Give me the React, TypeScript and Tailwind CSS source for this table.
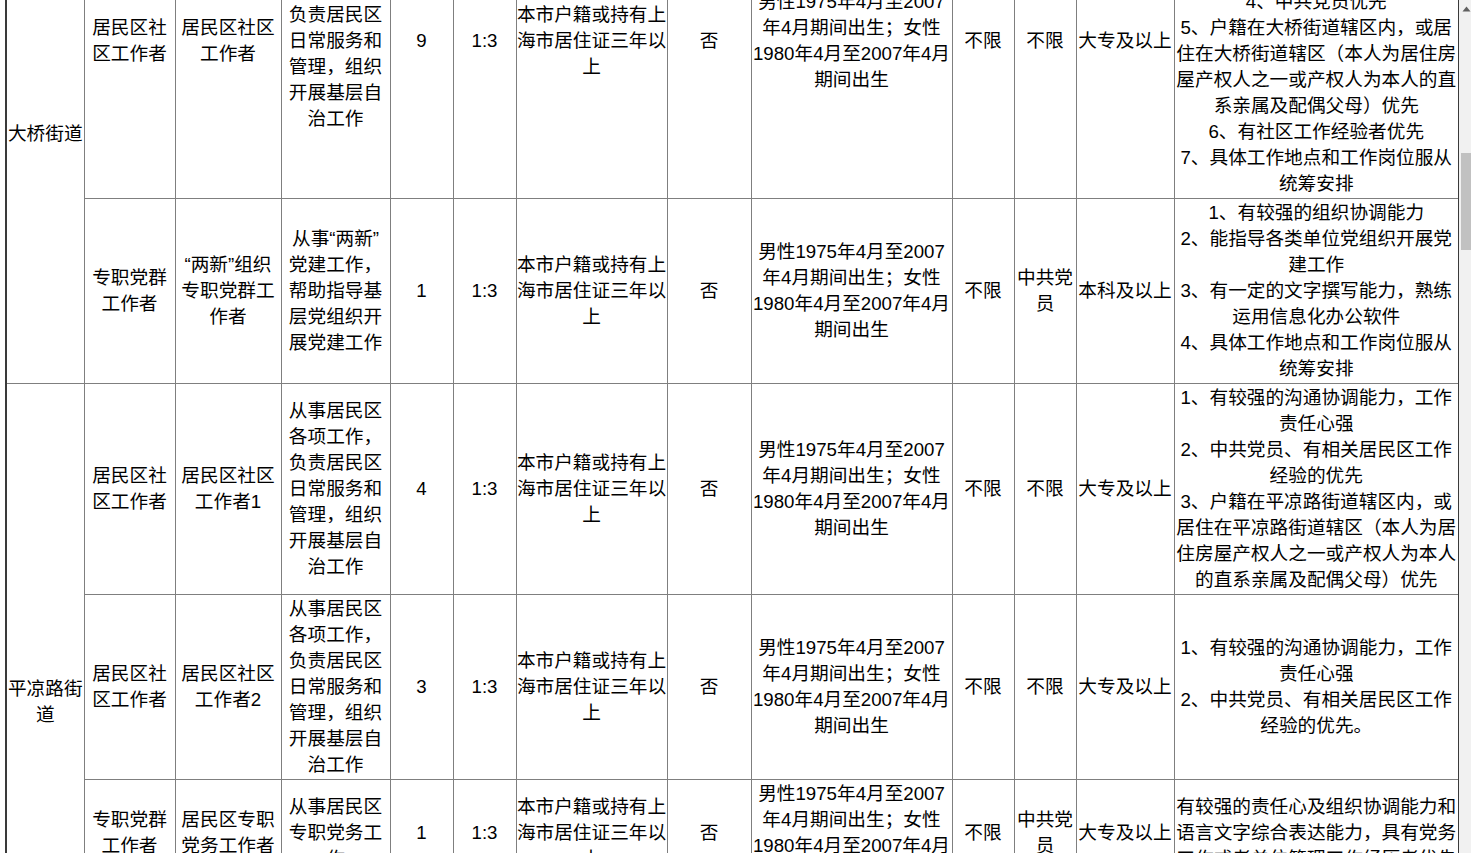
import { useLayoutEffect, useRef } from 'react';

interface Job {
  cat: string;
  name: string;
  duty: string;
  count: string;
  politics: string;
  edu: string;
  other: string[];
  anchor?: boolean;
}

interface Street {
  name: string;
  jobs: Job[];
}

const HUJI = '本市户籍或持有上海市居住证三年以上';
const AGE = '男性1975年4月至2007年4月期间出生；女性1980年4月至2007年4月期间出生';
const DUTY = '从事居民区各项工作，负责居民区日常服务和管理，组织开展基层自治工作';
const PARTY_DUTY = '从事“两新”\n党建工作，帮助指导基层党组织开展党建工作';

const HEADERS = [
  '街道',
  '岗位类别',
  '岗位名称',
  '岗位简介',
  '招聘人数',
  '开考比例',
  '户籍要求',
  '是否要求社区工作经历',
  '年龄要求',
  '专业要求',
  '政治面貌',
  '学历要求',
  '其他条件',
];

const COLS = [
  'w-[78px]',
  'w-[91px]',
  'w-[106px]',
  'w-[109px]',
  'w-[63px]',
  'w-[63px]',
  'w-[151px]',
  'w-[84px]',
  'w-[201px]',
  'w-[62px]',
  'w-[62px]',
  'w-[98px]',
  'w-[285px]',
];

function social(street: string, count: string): Job {
  return {
    cat: '居民区社区工作者',
    name: '居民区社区工作者',
    duty: DUTY,
    count,
    politics: '不限',
    edu: '大专及以上',
    other: [
      '1、有较强的沟通协调能力，工作责任心强',
      '2、身体健康，品行端正',
      '3、热爱社区工作',
      '4、中共党员优先',
      `5、户籍在${street}辖区内，或居住在${street}辖区（本人为居住房屋产权人之一或产权人为本人的直系亲属及配偶父母）优先`,
      '6、有社区工作经验者优先',
      '7、具体工作地点和工作岗位服从统筹安排',
    ],
  };
}

function party(anchor = false): Job {
  return {
    cat: '专职党群工作者',
    name: '“两新”组织专职党群工作者',
    duty: PARTY_DUTY,
    count: '1',
    politics: '中共党员',
    edu: '本科及以上',
    other: [
      '1、有较强的组织协调能力',
      '2、能指导各类单位党组织开展党建工作',
      '3、有一定的文字撰写能力，熟练运用信息化办公软件',
      '4、具体工作地点和工作岗位服从统筹安排',
    ],
    anchor,
  };
}

const streets: Street[] = [
  { name: '定海路街道', jobs: [social('定海路街道', '6'), party()] },
  { name: '大桥街道', jobs: [social('大桥街道', '9'), party(true)] },
  {
    name: '平凉路街道',
    jobs: [
      {
        cat: '居民区社区工作者',
        name: '居民区社区工作者1',
        duty: DUTY,
        count: '4',
        politics: '不限',
        edu: '大专及以上',
        other: [
          '1、有较强的沟通协调能力，工作责任心强',
          '2、中共党员、有相关居民区工作经验的优先',
          '3、户籍在平凉路街道辖区内，或居住在平凉路街道辖区（本人为居住房屋产权人之一或产权人为本人的直系亲属及配偶父母）优先',
        ],
      },
      {
        cat: '居民区社区工作者',
        name: '居民区社区工作者2',
        duty: DUTY,
        count: '3',
        politics: '不限',
        edu: '大专及以上',
        other: ['1、有较强的沟通协调能力，工作责任心强', '2、中共党员、有相关居民区工作经验的优先。'],
      },
      {
        cat: '专职党群工作者',
        name: '居民区专职党务工作者',
        duty: '从事居民区专职党务工作',
        count: '1',
        politics: '中共党员',
        edu: '大专及以上',
        other: ['有较强的责任心及组织协调能力和语言文字综合表达能力，具有党务工作或者单位管理工作经历者优先'],
      },
      {
        cat: '专职党群工作者',
        name: '“两新”组织专职党群工作者',
        duty: PARTY_DUTY,
        count: '1',
        politics: '中共党员',
        edu: '本科及以上',
        other: ['1、有较强的组织协调能力', '2、能指导各类单位党组织开展党建工作', '3、具体工作地点和工作岗位服从统筹安排'],
      },
    ],
  },
  { name: '江浦路街道', jobs: [social('江浦路街道', '5'), party()] },
];

const cell = 'border border-[#7f7f7f] px-0 py-px text-center align-middle';

export default function App() {
  const mainRef = useRef<HTMLDivElement>(null);
  const anchorRef = useRef<HTMLTableRowElement>(null);

  useLayoutEffect(() => {
    const box = mainRef.current;
    const row = anchorRef.current;
    if (!box || !row) return;
    const top = row.getBoundingClientRect().top - box.getBoundingClientRect().top + box.scrollTop;
    box.scrollTop = top - 199;
  }, []);

  return (
    <div className="flex h-[853px] w-full overflow-hidden bg-white font-['Liberation_Sans','Noto_Sans_CJK_SC',sans-serif] text-[18.67px] leading-[26px] text-black">
      <div ref={mainRef} className="flex-1 overflow-hidden pl-[5px]">
        <h1 className="py-6 text-center text-[24px] font-bold">杨浦区2024年社区工作者公开招聘岗位表</h1>
        <table className="w-[1453px] table-fixed border-collapse border-2 border-[#3a3a3a]">
          <colgroup>
            {COLS.map((c, i) => (
              <col key={i} className={c} />
            ))}
          </colgroup>
          <thead>
            <tr>
              {HEADERS.map((h) => (
                <th key={h} className={`${cell} font-bold`}>
                  {h}
                </th>
              ))}
            </tr>
          </thead>
          <tbody>
            {streets.map((s) =>
              s.jobs.map((j, i) => (
                <tr key={s.name + i} ref={j.anchor ? anchorRef : undefined}>
                  {i === 0 && (
                    <td rowSpan={s.jobs.length} className={cell}>
                      {s.name}
                    </td>
                  )}
                  <td className={cell}>{j.cat}</td>
                  <td className={cell}>{j.name}</td>
                  <td className={`${cell} whitespace-pre-line`}>{j.duty}</td>
                  <td className={cell}>{j.count}</td>
                  <td className={cell}>1:3</td>
                  <td className={cell}>{HUJI}</td>
                  <td className={cell}>否</td>
                  <td className={cell}>{AGE}</td>
                  <td className={cell}>不限</td>
                  <td className={cell}>{j.politics}</td>
                  <td className={cell}>{j.edu}</td>
                  <td className={cell}>
                    {j.other.map((o) => (
                      <div key={o}>{o}</div>
                    ))}
                  </td>
                </tr>
              ))
            )}
          </tbody>
        </table>
        <div className="h-[200px]" />
      </div>
      <div className="flex w-[12px] shrink-0 flex-col bg-[#f1f1f1] pl-[2px]">
        <div className="flex h-[17px] items-center pl-[1px]">
          <svg width="9" height="6" viewBox="0 0 9 6">
            <path d="M4.5 0.5 L8.5 5.5 L0.5 5.5 Z" fill="#606060" />
          </svg>
        </div>
        <div className="mt-[136px] h-[97px] bg-[#c1c1c1]" />
      </div>
    </div>
  );
}
